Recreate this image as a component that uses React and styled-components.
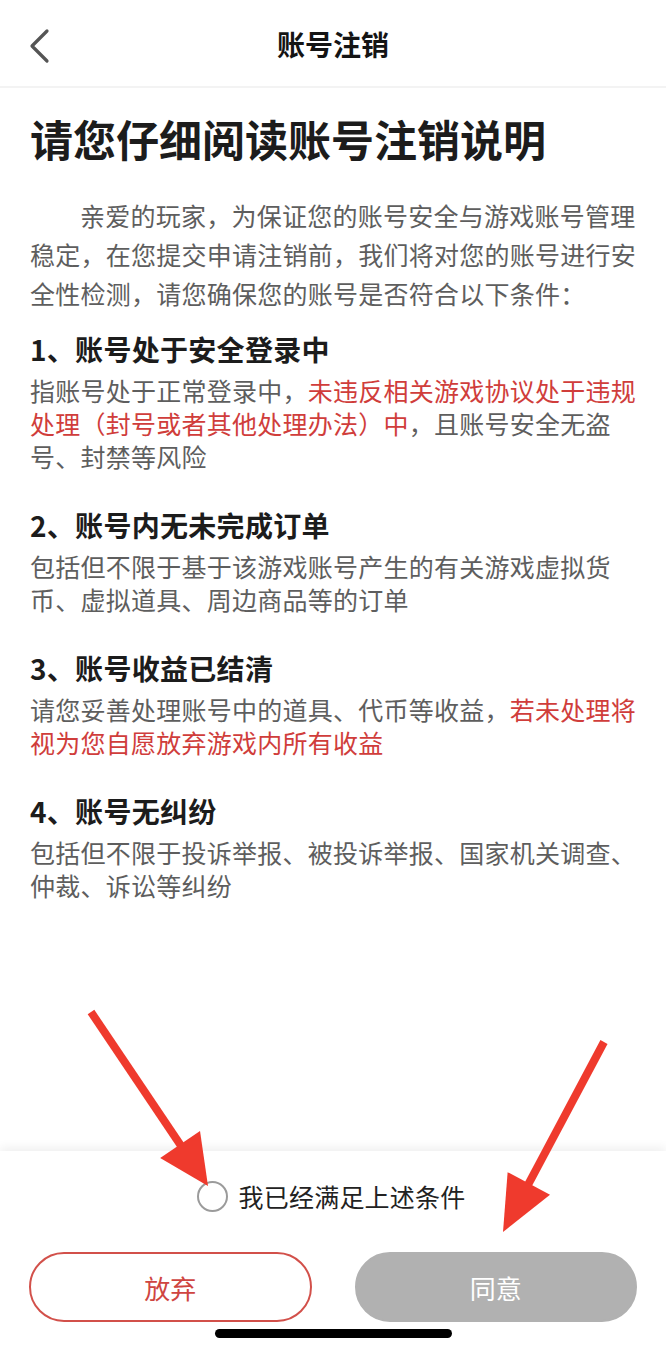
import React from "react";
import styled, { createGlobalStyle } from "styled-components";

const GlobalStyle = createGlobalStyle`
  html, body {
    margin: 0;
    padding: 0;
    background: #ffffff;
  }
  body {
    font-family: "Noto Sans CJK SC", "Noto Sans", sans-serif;
    -webkit-font-smoothing: antialiased;
  }
  * { box-sizing: border-box; }
`;

const Page = styled.div`
  position: relative;
  width: 666px;
  height: 1351px;
  display: flex;
  flex-direction: column;
  overflow: hidden;
  background: #fff;
`;

const Header = styled.header`
  position: relative;
  height: 88px;
  flex: none;
  display: flex;
  align-items: center;
  justify-content: center;
  border-bottom: 2px solid #f3f3f3;
  padding-top: 2px;
`;

const BackButton = styled.button`
  position: absolute;
  left: 24px;
  top: 24px;
  width: 32px;
  height: 44px;
  padding: 0;
  border: none;
  background: transparent;
  display: flex;
  align-items: center;
  justify-content: center;
`;

const HeaderTitle = styled.h1`
  margin: 0;
  font-size: 28px;
  font-weight: 700;
  color: #141414;
  line-height: 40px;
`;

const Content = styled.main`
  flex: 1;
  padding: 0 26px 0 30px;
`;

const PageTitle = styled.h2`
  margin: 22px 0 0;
  font-size: 43px;
  line-height: 56px;
  font-weight: 700;
  color: #1c1c1c;
  white-space: nowrap;
`;

const Intro = styled.p`
  margin: 30px 0 0;
  font-size: 25px;
  letter-spacing: 0.25px;
  line-height: 39px;
  color: #5e5e5e;
  text-indent: 2em;
`;

const Section = styled.section`
  margin-top: ${(p) => (p.$first ? "16px" : "32px")};
`;

const SectionTitle = styled.h3`
  margin: 0;
  font-size: 28px;
  letter-spacing: 0.3px;
  line-height: 40px;
  font-weight: 700;
  color: #1c1c1c;
`;

const SectionBody = styled.p`
  margin: 5px 0 0;
  font-size: 25px;
  letter-spacing: 0.25px;
  line-height: 33px;
  color: #5e5e5e;
`;

const Warn = styled.span`
  color: #d03d3b;
`;

const Footer = styled.footer`
  flex: none;
  background: #fff;
  box-shadow: 0 -3px 10px rgba(0, 0, 0, 0.07);
  padding: 30px 29px 13px;
  display: flex;
  flex-direction: column;
  align-items: center;
`;

const CheckRow = styled.label`
  display: flex;
  align-items: center;
  gap: 11px;
  font-size: 25px;
  letter-spacing: 0.2px;
  line-height: 31px;
  color: #222;
  margin-left: -4px;
`;

const Radio = styled.span`
  width: 31px;
  height: 31px;
  border-radius: 50%;
  border: 2px solid #9b9b9b;
  flex: none;
`;

const ButtonRow = styled.div`
  margin-top: 40px;
  width: 100%;
  display: grid;
  grid-template-columns: 1fr 1fr;
  gap: 43px;
`;

const ActionButton = styled.button`
  height: 70px;
  border-radius: 35px;
  font-family: inherit;
  font-size: 26px;
  padding: 0;
  border: 2px solid ${(p) => (p.$primary ? "#b1b1b1" : "#d2504a")};
  background: ${(p) => (p.$primary ? "#b1b1b1" : "#ffffff")};
  color: ${(p) => (p.$primary ? "#ffffff" : "#cf4541")};
`;

const HomeIndicator = styled.div`
  margin-top: 7px;
  width: 237px;
  height: 9px;
  border-radius: 5px;
  background: #000;
`;

const Annotation = styled.svg`
  position: absolute;
  left: 0;
  top: 0;
  width: 666px;
  height: 1351px;
  pointer-events: none;
`;

function Arrow({ x1, y1, x2, y2, head = 52, half = 24, width = 8, color = "#ef3a2d" }) {
  const dx = x2 - x1;
  const dy = y2 - y1;
  const len = Math.hypot(dx, dy);
  const ux = dx / len;
  const uy = dy / len;
  const bx = x2 - ux * head;
  const by = y2 - uy * head;
  const nx = -uy;
  const ny = ux;
  const pts = [
    [x2, y2],
    [bx + nx * half, by + ny * half],
    [bx - nx * half, by - ny * half],
  ]
    .map((p) => p.join(","))
    .join(" ");
  return (
    <g>
      <line
        x1={x1}
        y1={y1}
        x2={bx + ux * 4}
        y2={by + uy * 4}
        stroke={color}
        strokeWidth={width}
      />
      <polygon points={pts} fill={color} />
    </g>
  );
}

export default function App() {
  return (
    <>
      <GlobalStyle />
      <Page>
        <Header>
          <BackButton aria-label="返回">
            <svg width="24" height="36" viewBox="0 0 24 36">
              <polyline
                points="19,3 4,18 19,33"
                fill="none"
                stroke="#555"
                strokeWidth="3.2"
                strokeLinecap="round"
                strokeLinejoin="round"
              />
            </svg>
          </BackButton>
          <HeaderTitle>账号注销</HeaderTitle>
        </Header>

        <Content>
          <PageTitle>请您仔细阅读账号注销说明</PageTitle>
          <Intro>
            亲爱的玩家，为保证您的账号安全与游戏账号管理稳定，在您提交申请注销前，我们将对您的账号进行安全性检测，请您确保您的账号是否符合以下条件：
          </Intro>

          <Section $first>
            <SectionTitle>1、账号处于安全登录中</SectionTitle>
            <SectionBody>
              指账号处于正常登录中，
              <Warn>未违反相关游戏协议处于违规处理（封号或者其他处理办法）中</Warn>
              ，且账号安全无盗号、封禁等风险
            </SectionBody>
          </Section>

          <Section>
            <SectionTitle>2、账号内无未完成订单</SectionTitle>
            <SectionBody>
              包括但不限于基于该游戏账号产生的有关游戏虚拟货币、虚拟道具、周边商品等的订单
            </SectionBody>
          </Section>

          <Section>
            <SectionTitle>3、账号收益已结清</SectionTitle>
            <SectionBody>
              请您妥善处理账号中的道具、代币等收益，
              <Warn>若未处理将视为您自愿放弃游戏内所有收益</Warn>
            </SectionBody>
          </Section>

          <Section>
            <SectionTitle>4、账号无纠纷</SectionTitle>
            <SectionBody>
              包括但不限于投诉举报、被投诉举报、国家机关调查、仲裁、诉讼等纠纷
            </SectionBody>
          </Section>
        </Content>

        <Footer>
          <CheckRow>
            <Radio />
            我已经满足上述条件
          </CheckRow>
          <ButtonRow>
            <ActionButton>放弃</ActionButton>
            <ActionButton $primary>同意</ActionButton>
          </ButtonRow>
          <HomeIndicator />
        </Footer>

        <Annotation viewBox="0 0 666 1351">
          <Arrow x1={91} y1={1012} x2={208} y2={1186} head={50} half={24} />
          <Arrow x1={604} y1={1042} x2={503} y2={1232} head={55} half={24} />
        </Annotation>
      </Page>
    </>
  );
}
